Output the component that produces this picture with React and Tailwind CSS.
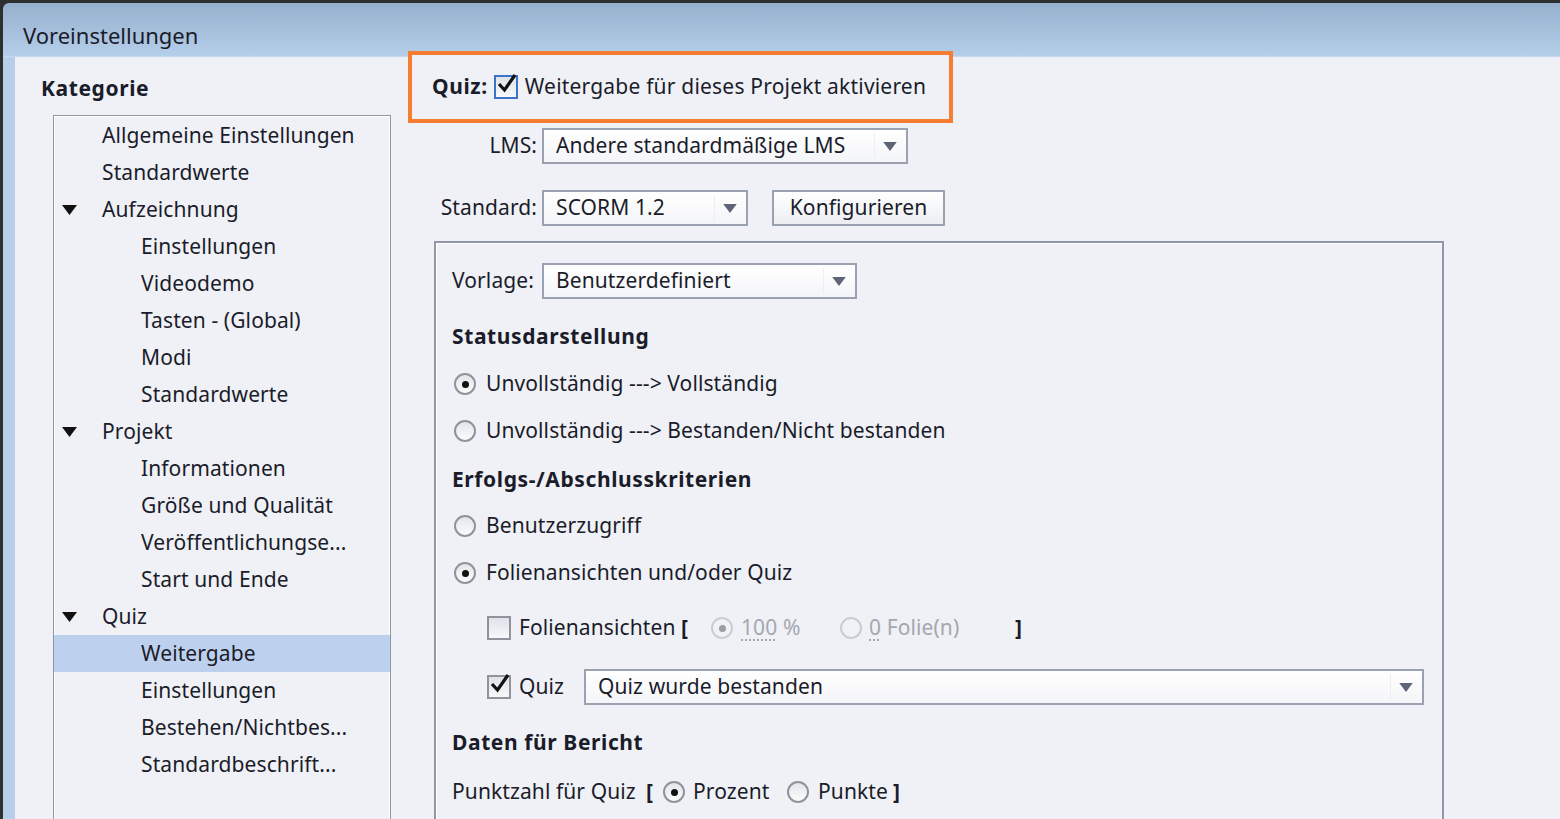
import React from "react";

const font = { fontFamily: '"Noto Sans", "Open Sans", sans-serif' };

// small down-pointing triangle used in the tree and in combo boxes
function Caret({ className = "", w = 15, h = 10 }) {
    return (
        <svg width={w} height={h} viewBox="0 0 15 10" className={className}>
            <polygon points="0,0 15,0 7.5,10" fill="currentColor"/>
        </svg>
    );
}

function Radio({ checked = false, disabled = false }) {
    return (
        <span
            className={
                "flex h-[22px] w-[22px] shrink-0 items-center justify-center rounded-full border-2 " +
                (disabled
                    ? "border-[#c9ccd3] bg-[#f1f2f5]"
                    : "border-[#8e939c] bg-gradient-to-b from-[#e4e6ea] to-[#fbfbfc]")
            }
        >
            {checked && (
                <span className={"h-[7px] w-[7px] rounded-full " + (disabled ? "bg-[#9a9ea7]" : "bg-[#111]")}/>
            )}
        </span>
    );
}

function Check({ checked = false, focus = false }) {
    return (
        <span
            className={
                "relative flex h-[24px] w-[24px] shrink-0 items-center justify-center border-2 bg-gradient-to-b from-[#dfe2e8] to-[#f7f8fa] " +
                (focus ? "border-[#3b73c9]" : "border-[#8e939c]")
            }
        >
            {checked && (
                <svg width="20" height="20" viewBox="0 0 20 20" className="absolute -top-[3px] left-[1px]">
                    <path d="M2 10 L7.5 16 L18 1" fill="none" stroke="#111" strokeWidth="3.2"/>
                </svg>
            )}
        </span>
    );
}

function Combo({ value, className = "" }) {
    return (
        <div
            className={
                "flex h-[36px] items-center border-2 border-[#9aa1b0] bg-gradient-to-b from-white to-[#f4f5f8] pl-[12px] pr-[9px] " +
                className
            }
        >
            <span className="flex-1 truncate">{value}</span>
            <span className="mr-[4px] h-[26px] w-px bg-[#eceef2]"/>
            <Caret w={14} h={9} className="ml-[4px] text-[#5d6577]"/>
        </div>
    );
}

const tree = [
    { label: "Allgemeine Einstellungen", level: 1 },
    { label: "Standardwerte", level: 1 },
    { label: "Aufzeichnung", level: 1, open: true },
    { label: "Einstellungen", level: 2 },
    { label: "Videodemo", level: 2 },
    { label: "Tasten - (Global)", level: 2 },
    { label: "Modi", level: 2 },
    { label: "Standardwerte", level: 2 },
    { label: "Projekt", level: 1, open: true },
    { label: "Informationen", level: 2 },
    { label: "Größe und Qualität", level: 2 },
    { label: "Veröffentlichungse...", level: 2 },
    { label: "Start und Ende", level: 2 },
    { label: "Quiz", level: 1, open: true },
    { label: "Weitergabe", level: 2, selected: true },
    { label: "Einstellungen", level: 2 },
    { label: "Bestehen/Nichtbes...", level: 2 },
    { label: "Standardbeschrift...", level: 2 },
];

function TreeRow({ item }) {
    return (
        <div className={"flex h-[37px] items-center " + (item.selected ? "bg-[#bdd1ee]" : "")}>
            <span className="flex w-[48px] justify-end pr-[25px]">
                {item.open && <Caret className="text-[#111]"/>}
            </span>
            <span className={item.level === 2 ? "pl-[39px]" : "pl-0"}>{item.label}</span>
        </div>
    );
}

export default function App() {
    return (
        <div style={font} className="h-[819px] w-[1560px] overflow-hidden bg-[#2e2f31] pl-[3px] pt-[3px] text-[21px] tracking-[0.1px] text-[#1b1c2a]">
            <div className="flex h-full flex-col overflow-hidden rounded-tl-[6px]">
                {/* title bar */}
                <div className="flex h-[54px] shrink-0 items-center border-b border-[#c4d7ee] bg-gradient-to-b from-[#96b0cd] to-[#b5ceea] pl-[20px] pt-[12px] text-[22px] tracking-normal">
                    Voreinstellungen
                </div>

                <div className="flex flex-1">
                    <div className="w-[12px] shrink-0 bg-[#b7cfea]"/>

                    <div className="flex flex-1 bg-[#eff1f6]">
                        {/* Kategorie column */}
                        <div className="w-[393px] shrink-0">
                            <div className="mt-[20px] flex h-[24px] items-center pl-[26px] font-bold tracking-[0.6px]">Kategorie</div>
                            <div className="ml-[38px] mt-[14px] h-[760px] w-[338px] border border-[#8f97a7] shadow-[inset_0_0_0_1px_#ffffff]">
                                <div className="pt-[1px]">
                                    {tree.map((item, i) => (
                                        <TreeRow key={i} item={item}/>
                                    ))}
                                </div>
                            </div>
                        </div>

                        {/* Weitergabe page */}
                        <div className="flex-1">
                            <div className="relative z-10 -mt-[6px] flex h-[72px] w-[545px] items-center border-4 border-[#f77d31] bg-[#eff1f6] pl-[20px]">
                                <span className="font-bold tracking-[0.6px]">Quiz:</span>
                                <span className="ml-[6px]"><Check checked focus/></span>
                                <span className="ml-[7px] tracking-[0.2px]">Weitergabe für dieses Projekt aktivieren</span>
                            </div>

                            <div className="mt-[5px] flex h-[36px] items-center">
                                <span className="w-[129px] text-right">LMS:</span>
                                <Combo value="Andere standardmäßige LMS" className="ml-[5px] w-[366px]"/>
                            </div>

                            <div className="mt-[26px] flex h-[36px] items-center">
                                <span className="w-[129px] text-right">Standard:</span>
                                <Combo value="SCORM 1.2" className="ml-[5px] w-[206px]"/>
                                <button className="ml-[24px] h-[36px] w-[173px] border-2 border-[#9aa1b0] bg-gradient-to-b from-white to-[#eceef2] tracking-[0.1px]">
                                    Konfigurieren
                                </button>
                            </div>

                            <div className="ml-[26px] mt-[15px] h-[600px] w-[1010px] border-2 border-[#9097a6] pl-[16px] pt-[20px] shadow-[inset_1px_1px_0_#ffffff]">
                                <div className="flex h-[36px] items-center">
                                    <span className="w-[90px]">Vorlage:</span>
                                    <Combo value="Benutzerdefiniert" className="w-[315px]"/>
                                </div>

                                <div className="mt-[20px] flex h-[36px] items-center font-bold tracking-[0.6px]">Statusdarstellung</div>
                                <div className="mt-[11px] flex h-[36px] items-center pl-[2px]">
                                    <Radio checked/>
                                    <span className="ml-[10px]">Unvollständig ---&gt; Vollständig</span>
                                </div>
                                <div className="mt-[11px] flex h-[36px] items-center pl-[2px]">
                                    <Radio/>
                                    <span className="ml-[10px]">Unvollständig ---&gt; Bestanden/Nicht bestanden</span>
                                </div>

                                <div className="mt-[13px] flex h-[36px] items-center font-bold tracking-[0.6px]">Erfolgs-/Abschlusskriterien</div>
                                <div className="mt-[10px] flex h-[36px] items-center pl-[2px]">
                                    <Radio/>
                                    <span className="ml-[10px]">Benutzerzugriff</span>
                                </div>
                                <div className="mt-[11px] flex h-[36px] items-center pl-[2px]">
                                    <Radio checked/>
                                    <span className="ml-[10px]">Folienansichten und/oder Quiz</span>
                                </div>

                                <div className="mt-[19px] flex h-[36px] items-center pl-[35px]">
                                    <Check/>
                                    <span className="ml-[8px] w-[162px] shrink-0">Folienansichten</span>
                                    <span className="w-[30px] shrink-0 font-bold">[</span>
                                    <Radio checked disabled/>
                                    <span className="ml-[8px] w-[99px] shrink-0 text-[#a3a7b0]">
                                        <span className="underline decoration-dotted underline-offset-4">100</span> %
                                    </span>
                                    <Radio disabled/>
                                    <span className="ml-[7px] w-[146px] shrink-0 text-[#a3a7b0]">
                                        <span className="underline decoration-dotted underline-offset-4">0</span> Folie(n)
                                    </span>
                                    <span className="font-bold">]</span>
                                </div>

                                <div className="mt-[23px] flex h-[36px] items-center pl-[35px]">
                                    <Check checked/>
                                    <span className="ml-[8px] w-[65px] shrink-0">Quiz</span>
                                    <Combo value="Quiz wurde bestanden" className="w-[840px]"/>
                                </div>

                                <div className="mt-[20px] flex h-[36px] items-center font-bold tracking-[0.6px]">Daten für Bericht</div>
                                <div className="mt-[13px] flex h-[36px] items-center">
                                    <span className="w-[194px] shrink-0">Punktzahl für Quiz</span>
                                    <span className="w-[17px] shrink-0 font-bold">[</span>
                                    <Radio checked/>
                                    <span className="ml-[8px] w-[94px] shrink-0">Prozent</span>
                                    <Radio/>
                                    <span className="ml-[9px] w-[75px] shrink-0">Punkte</span>
                                    <span className="font-bold">]</span>
                                </div>
                            </div>
                        </div>
                    </div>
                </div>
            </div>
        </div>
    );
}
